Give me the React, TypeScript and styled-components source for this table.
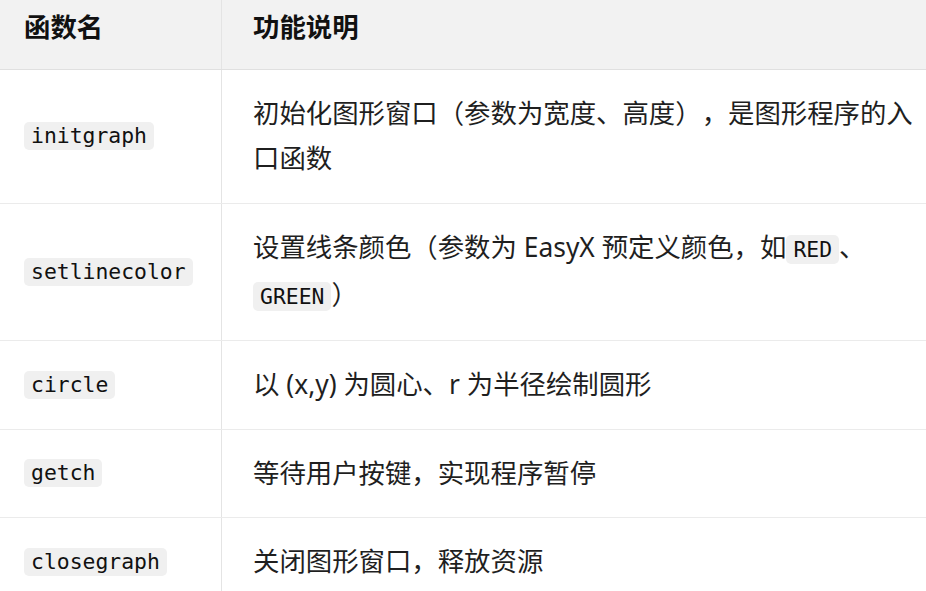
import styled, { createGlobalStyle } from "styled-components"

const GlobalStyle = createGlobalStyle`
  html, body {
    margin: 0;
    padding: 0;
    background: #ffffff;
  }
  body {
    font-family: "Noto Sans", "Noto Sans CJK SC", sans-serif;
    color: #1f1f1f;
    overflow: hidden;
    text-spacing-trim: space-all;
  }
`

const Table = styled.div`
  width: 926px;
  display: flex;
  flex-direction: column;
  font-size: 26.4px;
  line-height: 45px;
`

const Row = styled.div<{ $head?: boolean }>`
  display: grid;
  grid-template-columns: 222px 1fr;
  background: ${p => (p.$head ? "#f2f2f2" : "#ffffff")};
  border-bottom: 1px solid ${p => (p.$head ? "#e0e0e0" : "#ebebeb")};
`

const NameCell = styled.div<{ $head?: boolean }>`
  display: flex;
  align-items: center;
  border-right: 1px solid #e4e4e4;
  padding: ${p => (p.$head ? "5px 0 19px 24px" : "21px 0 21.5px 24px")};
  font-weight: ${p => (p.$head ? 700 : 400)};
  color: ${p => (p.$head ? "#111" : "inherit")};
`

const DescCell = styled.div<{ $head?: boolean }>`
  padding: ${p => (p.$head ? "5px 0 19px 31px" : "21px 0 21.5px 31px")};
  font-weight: ${p => (p.$head ? 700 : 400)};
  color: ${p => (p.$head ? "#111" : "inherit")};
  display: flex;
  align-items: center;
`

const Text = styled.span`
  display: block;
  width: 672px;
`

const Code = styled.code<{ $inline?: boolean }>`
  font-family: "DejaVu Sans Mono", "Liberation Mono", monospace;
  font-size: 21.4px;
  line-height: ${p => (p.$inline ? "44px" : "24px")};
  color: #111;
  background: #f0f0f0;
  border-radius: 5px;
  padding: 2px 7px;
`

const rows = [
  { name: "initgraph", desc: <>初始化图形窗口（参数为宽度、高度），是图形程序的入口函数</> },
  {
    name: "setlinecolor",
    desc: (
      <>
        设置线条颜色（参数为 EasyX 预定义颜色，如<Code $inline>RED</Code>、<Code $inline>GREEN</Code>）
      </>
    ),
  },
  { name: "circle", desc: <>以 (x,y) 为圆心、r 为半径绘制圆形</> },
  { name: "getch", desc: <>等待用户按键，实现程序暂停</> },
  { name: "closegraph", desc: <>关闭图形窗口，释放资源</> },
]

export default function App() {
  return (
    <>
      <GlobalStyle />
      <Table>
        <Row $head>
          <NameCell $head>函数名</NameCell>
          <DescCell $head>功能说明</DescCell>
        </Row>
        {rows.map(r => (
          <Row key={r.name}>
            <NameCell>
              <Code>{r.name}</Code>
            </NameCell>
            <DescCell>
              <Text>{r.desc}</Text>
            </DescCell>
          </Row>
        ))}
      </Table>
    </>
  )
}
